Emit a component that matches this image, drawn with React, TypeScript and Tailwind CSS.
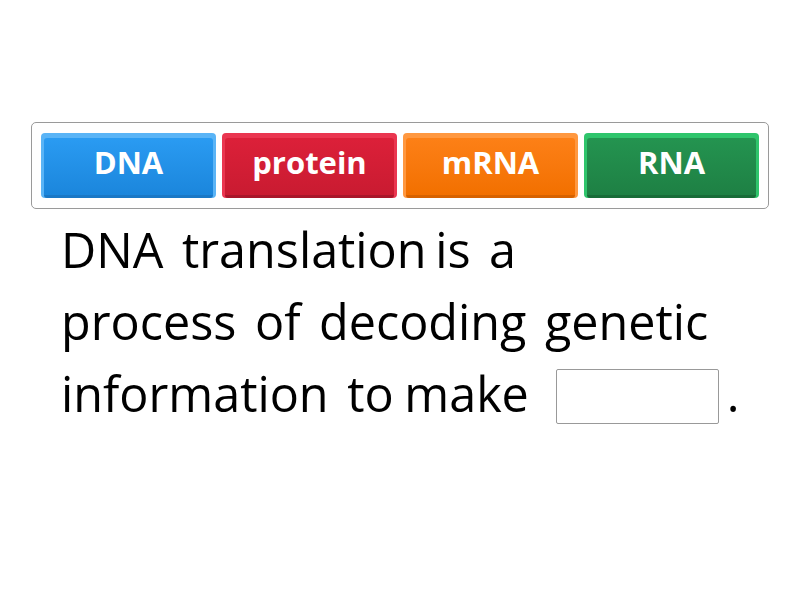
const cards = [
  { label: "DNA", frame: "bg-[#5ab4f6]", inner: "bg-gradient-to-b from-[#2a9bf2] to-[#1b86dc]", edge: "border-[#1a78c6]" },
  { label: "protein", frame: "bg-[#ea3650]", inner: "bg-gradient-to-b from-[#dc2039] to-[#c91b31]", edge: "border-[#a9162a]" },
  { label: "mRNA", frame: "bg-[#ff9840]", inner: "bg-gradient-to-b from-[#fd8016] to-[#f27000]", edge: "border-[#d76200]" },
  { label: "RNA", frame: "bg-[#2fc56c]", inner: "bg-gradient-to-b from-[#249450] to-[#1e8044]", edge: "border-[#186c38]" },
];

export default function App() {
  return (
    <div className="w-[800px] h-[600px] bg-white pt-[122px] font-['Open_Sans',sans-serif]">
      <div className="mx-[31px] h-[87px] rounded-[5px] border border-[#9a9a9a] px-[9px] py-[10px] flex gap-[6px]">
        {cards.map((c) => (
          <div
            key={c.label}
            className={`flex-1 rounded-[4px] ${c.frame} pt-[5px] px-[3px] pb-0 flex`}
          >
            <div
              className={`flex-1 rounded-[3px] ${c.inner} border-b-[3px] ${c.edge} flex items-center justify-center text-white font-bold text-[31px] leading-none pb-[8px]`}
            >
              {c.label}
            </div>
          </div>
        ))}
      </div>
      <div className="pl-[61px] pr-[40px] mt-[4px] text-[48.5px] leading-[72px] text-black [word-spacing:6px] whitespace-nowrap">
        <div>
          DNA translation<span className="ml-[-10px]"> </span>is a
        </div>
        <div>process of decoding genetic</div>
        <div className="flex items-center">
          <span>
            information to<span className="ml-[-8px]"> </span>make
          </span>
          <span className="ml-[27px] inline-block w-[163px] h-[55px] rounded-[2px] border border-[#999] mt-[6px]" />
          <span className="ml-[8px]">.</span>
        </div>
      </div>
    </div>
  );
}
